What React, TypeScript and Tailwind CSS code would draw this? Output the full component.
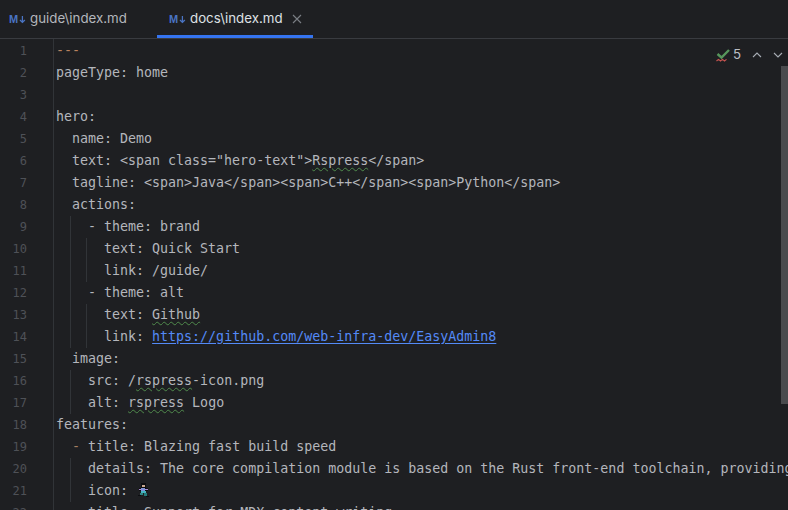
import React from 'react';

type Seg = { t: string; c?: 'fence' | 'dash' | 'link' | 'wavy' };
type Line = { segs: Seg[]; guides?: number[] };

const lines: Line[] = [
  { segs: [{ t: '---', c: 'fence' }] },
  { segs: [{ t: 'pageType: home' }] },
  { segs: [{ t: ' ' }] },
  { segs: [{ t: 'hero:' }] },
  { segs: [{ t: '  name: Demo' }] },
  { segs: [{ t: '  text: <span class="hero-text">' }, { t: 'Rspress', c: 'wavy' }, { t: '</span>' }] },
  { segs: [{ t: '  tagline: <span>Java</span><span>C++</span><span>Python</span>' }] },
  { segs: [{ t: '  actions:' }] },
  { segs: [{ t: '    - theme: brand' }], guides: [14] },
  { segs: [{ t: '      text: Quick Start' }], guides: [14, 30] },
  { segs: [{ t: '      link: /guide/' }], guides: [14, 30] },
  { segs: [{ t: '    - theme: alt' }], guides: [14] },
  { segs: [{ t: '      text: ' }, { t: 'Github', c: 'wavy' }], guides: [14, 30] },
  { segs: [{ t: '      link: ' }, { t: 'https://github.com/web-infra-dev/EasyAdmin8', c: 'link' }], guides: [14, 30] },
  { segs: [{ t: '  image:' }] },
  { segs: [{ t: '    src: /' }, { t: 'rspress', c: 'wavy' }, { t: '-icon.png' }], guides: [14] },
  { segs: [{ t: '    alt: ' }, { t: 'rspress', c: 'wavy' }, { t: ' Logo' }], guides: [14] },
  { segs: [{ t: 'features:' }] },
  { segs: [{ t: '  ' }, { t: '-', c: 'dash' }, { t: ' title: Blazing fast build speed' }] },
  { segs: [{ t: '    details: The core compilation module is based on the Rust front-end toolchain, providing a blazing fast build' }], guides: [14] },
  { segs: [{ t: '    icon: ' }], guides: [14] },
  { segs: [{ t: '  ' }, { t: '-', c: 'dash' }, { t: ' title: Support for MDX content writing' }] },
];

const segClass: Record<string, string> = {
  fence: 'text-[#b9825f]',
  dash: 'text-[#a67f62]',
  link: 'text-[#548af7] underline underline-offset-2',
  wavy: 'underline decoration-wavy decoration-[#4f8a4c] decoration-1 underline-offset-2',
};

function MdIcon() {
  return (
    <span className="flex items-center w-[17px] font-['Liberation_Sans',sans-serif] text-[11px] font-bold leading-none text-[#4a74c4]">
      <span>M</span>
      <svg width="7" height="9" viewBox="0 0 7 9" className="ml-[1px]">
        <path d="M3.5 1v6.5M1 5l2.5 2.5L6 5" fill="none" stroke="#4a74c4" strokeWidth="1.3" />
      </svg>
    </span>
  );
}

function Runner() {
  return (
    <svg width="11" height="15" viewBox="0 0 11 15" shapeRendering="crispEdges" className="ml-[2px] inline-block align-[-3px]">
      <rect x="3" y="0" width="5" height="5" fill="#0c0d10" />
      <rect x="4" y="2" width="3" height="2" fill="#c9a890" />
      <rect x="1" y="5" width="9" height="3" fill="#0c0d10" />
      <rect x="3" y="5" width="4" height="3" fill="#7f92d8" />
      <rect x="1" y="6" width="2" height="1" fill="#a88ad0" />
      <rect x="7" y="6" width="3" height="1" fill="#a88ad0" />
      <rect x="3" y="8" width="5" height="2" fill="#45b5c0" />
      <rect x="6" y="10" width="3" height="3" fill="#237a7a" />
      <rect x="2" y="10" width="3" height="2" fill="#2f8585" />
      <rect x="0" y="12" width="3" height="1" fill="#0c0d10" />
      <rect x="8" y="13" width="3" height="1" fill="#0c0d10" />
    </svg>
  );
}

function Tab({ name, active }: { name: string; active?: boolean }) {
  return (
    <div className={`relative flex h-full items-center ${active ? 'w-[156px] pl-[12px]' : 'w-[157px] pl-[9px]'}`}>
      <MdIcon />
      <span className={`ml-[4px] text-[13.3px] ${active ? 'text-[#dfe1e5]' : 'text-[#b4b6bc]'}`}>{name}</span>
      {active && (
        <svg width="10" height="10" viewBox="0 0 10 10" className="ml-[9px]">
          <path d="M1 1l8 8M9 1l-8 8" stroke="#7a7e85" strokeWidth="1.1" />
        </svg>
      )}
      {active && <div className="absolute bottom-0 left-0 right-0 h-[3px] bg-[#3574f0]" />}
    </div>
  );
}

export default function App() {
  return (
    <div className="relative h-[510px] w-[788px] overflow-hidden bg-[#1e1f22] font-['Inter',sans-serif]">
      <div className="flex h-[39px] items-stretch border-b border-[#393b40]">
        <Tab name="guide\index.md" />
        <Tab name="docs\index.md" active />
      </div>

      <div className="flex font-['DejaVu_Sans_Mono','Liberation_Mono',monospace] text-[13.3px] leading-[22px]">
        <div className="w-[54px] shrink-0 border-r border-[#313438] pr-[26px] pt-[1px] text-right text-[12px] text-[#4e5157]">
          {lines.map((_, i) => (
            <div key={i} className="h-[22px]">{i + 1}</div>
          ))}
        </div>
        <div className="min-w-0 flex-1 pl-[2px] pt-[1px]">
          {lines.map((line, i) => (
            <div key={i} className="relative h-[22px] whitespace-pre text-[#b4b6bc]">
              {line.guides?.map((g) => (
                <div key={g} className="absolute top-0 bottom-0 w-px bg-[#313438]" style={{ left: g }} />
              ))}
              {line.segs.map((s, j) => (
                <span key={j} className={s.c ? segClass[s.c] : ''}>{s.t}</span>
              ))}
              {i === 20 && <Runner />}
            </div>
          ))}
        </div>
      </div>

      {/* inspection widget */}
      <div className="absolute right-[5px] top-[45px] flex items-center text-[13.3px] text-[#bcbec4]">
        <svg width="15" height="14" viewBox="0 0 15 14">
          <path d="M1.5 6 5.5 9.5 13 2" fill="none" stroke="#57965c" strokeWidth="2.4" />
          <path d="M0.5 13l2-1.6 2 1.6 2-1.6 2 1.6 2-1.6" fill="none" stroke="#c75450" strokeWidth="1.2" />
        </svg>
        <span className="ml-[2px]">5</span>
        <svg width="10" height="6" viewBox="0 0 10 6" className="ml-[11px]">
          <path d="M1 5l4-4 4 4" fill="none" stroke="#a8adb5" strokeWidth="1.1" />
        </svg>
        <svg width="10" height="6" viewBox="0 0 10 6" className="ml-[11px]">
          <path d="M1 1l4 4 4-4" fill="none" stroke="#a8adb5" strokeWidth="1.1" />
        </svg>
      </div>

      {/* scrollbar thumb */}
      <div className="absolute right-0 top-[66px] h-[338px] w-[7px] bg-[#4a4b4e]" />
    </div>
  );
}
